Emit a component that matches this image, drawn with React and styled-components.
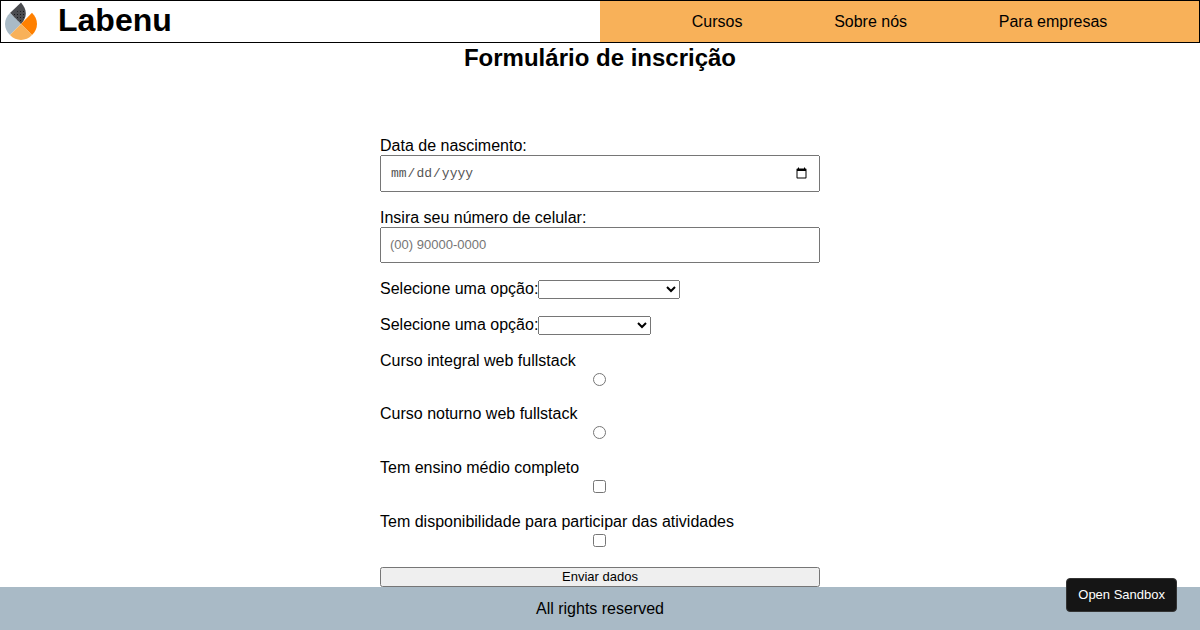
import styled, { createGlobalStyle } from 'styled-components';

const GlobalStyle = createGlobalStyle`
  * {
    box-sizing: border-box;
  }

  body {
    margin: 0;
    font-family: "Liberation Sans", Arial, sans-serif;
    font-size: 16px;
    line-height: 18px;
    color: #000;
    background-color: #fff;
  }
`;

const Logo = () => (
  <LogoSvg viewBox="0 0 40 41" aria-hidden="true">
    <defs>
      <pattern id="dots" width="3" height="3" patternUnits="userSpaceOnUse">
        <rect width="3" height="3" fill="#4b4c50" />
        <rect x="1" y="1" width="1" height="1" fill="#17181b" />
      </pattern>
    </defs>
    <path d="M20 23 L9 12 L20 1.5 C23 5 24.8 8.5 24.8 12.5 C24.8 16 23.2 19.5 20 23Z" fill="#4b4c50" />
    <path d="M20 23 L11.5 14.5 L14.5 10.5 L23 10 L23 16Z" fill="url(#dots)" />
    <path d="M20 23 L9 12 C6 15 4 18.5 4 23 C4 27.5 6 31 9 34Z" fill="#a9bac6" />
    <path d="M20 23 L31 11.8 C34 15 36 18.5 36 23 C36 27.5 34 31 31 34Z" fill="#ff8000" />
    <path d="M20 23 L31 34 C25 40.5 15 40.5 9 34Z" fill="#f8b159" />
  </LogoSvg>
);

const App = () => {
  return (
    <Page>
      <GlobalStyle />
      <Header>
        <Brand>
          <Logo />
          <h1>Labenu</h1>
        </Brand>
        <Menu>
          <a href="#cursos">Cursos</a>
          <a href="#sobre">Sobre nós</a>
          <a href="#empresas">Para empresas</a>
        </Menu>
      </Header>

      <Main>
        <Title>Formulário de inscrição</Title>
        <Form onSubmit={(e) => e.preventDefault()}>
          <Field>
            <label htmlFor="nascimento">Data de nascimento:</label>
            <DateInput id="nascimento" type="date" />
          </Field>
          <Field>
            <label htmlFor="celular">Insira seu número de celular:</label>
            <TextInput id="celular" type="tel" placeholder="(00) 90000-0000" />
          </Field>
          <SelectRow>
            <label htmlFor="opcao1">Selecione uma opção:</label>
            <Select id="opcao1" $width={142}>
              <option></option>
            </Select>
          </SelectRow>
          <SelectRow>
            <label htmlFor="opcao2">Selecione uma opção:</label>
            <Select id="opcao2" $width={113}>
              <option></option>
            </Select>
          </SelectRow>
          <Field>
            <label htmlFor="integral">Curso integral web fullstack</label>
            <Check id="integral" type="radio" name="curso" />
          </Field>
          <Field>
            <label htmlFor="noturno">Curso noturno web fullstack</label>
            <Check id="noturno" type="radio" name="curso" />
          </Field>
          <Field>
            <label htmlFor="ensino">Tem ensino médio completo</label>
            <Check id="ensino" type="checkbox" />
          </Field>
          <Field>
            <label htmlFor="disponibilidade">Tem disponibilidade para participar das atividades</label>
            <Check id="disponibilidade" type="checkbox" />
          </Field>
          <Submit type="submit">Enviar dados</Submit>
        </Form>
      </Main>

      <Footer>All rights reserved</Footer>
      <SandboxButton type="button">Open Sandbox</SandboxButton>
    </Page>
  );
};

export default App;

const Page = styled.div`
  display: flex;
  flex-direction: column;
  min-height: 100vh;
`;

const Header = styled.header`
  display: grid;
  grid-template-columns: 1fr 1fr;
  border: 1px solid #000;
`;

const Brand = styled.div`
  display: flex;
  align-items: center;
  gap: 17px;

  h1 {
    margin: 0;
    padding-bottom: 3px;
    font-size: 32px;
    line-height: 36px;
  }
`;

const LogoSvg = styled.svg`
  width: 40px;
  height: 41px;
`;

const Menu = styled.nav`
  display: flex;
  justify-content: space-evenly;
  align-items: center;
  background-color: #f8b159;

  a {
    color: #000;
    text-decoration: none;
  }
`;

const Main = styled.main`
  flex: 1;
  display: flex;
  flex-direction: column;
  align-items: center;
`;

const Title = styled.h2`
  margin: 0 0 64px;
  font-size: 24px;
  line-height: 30px;
`;

const Form = styled.form`
  flex: 1;
  display: flex;
  flex-direction: column;
  justify-content: space-between;
  width: 440px;
  max-width: 100%;
`;

const Field = styled.div`
  display: flex;
  flex-direction: column;
`;

const SelectRow = styled.div`
  display: flex;
  align-items: center;
`;

const TextInput = styled.input`
  height: 36px;
  padding: 8px;
  font-family: "Liberation Sans", Arial, sans-serif;
  font-size: 13px;
`;

const DateInput = styled(TextInput)`
  height: 37px;
  font-family: "Liberation Mono", monospace;
  color: #555;
`;

const Select = styled.select`
  width: ${({ $width }) => $width}px;
  height: 19px;
`;

const Check = styled.input`
  align-self: center;
  width: 13px;
  height: 13px;
  margin: 3px 4px 3px 3px;
`;

const Submit = styled.button`
  height: 20px;
  padding: 0 6px 2px;
  font-family: "Liberation Sans", Arial, sans-serif;
  font-size: 13px;
`;

const Footer = styled.footer`
  display: flex;
  justify-content: center;
  align-items: center;
  height: 43px;
  background-color: #a9bac6;
`;

const SandboxButton = styled.button`
  position: fixed;
  right: 23px;
  bottom: 18px;
  height: 34px;
  padding: 0 11px 2px;
  border: 1px solid #343434;
  border-radius: 4px;
  background-color: #151515;
  color: #fff;
  font-family: "Liberation Sans", Arial, sans-serif;
  font-size: 13px;
`;
